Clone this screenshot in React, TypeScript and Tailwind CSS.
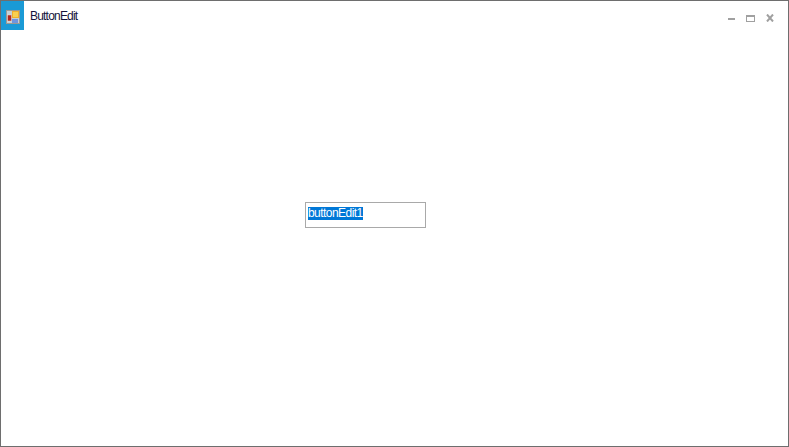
import React from 'react';

const AppIcon = () => (
    <svg width="14" height="14" viewBox="0 0 14 14" className="block">
        <rect x="0.5" y="0.5" width="13" height="13" fill="#c4d0d6" stroke="#9a9a94" />
        <rect x="1.5" y="5" width="4" height="6" fill="#b3261c" stroke="#e8e0d8" strokeWidth="0.5" />
        <rect x="6" y="1" width="7" height="7" fill="#f0b02c" />
        <rect x="7" y="2" width="5" height="5" fill="#f8d050" />
        <rect x="6" y="9" width="6" height="4" fill="#6f95df" />
    </svg>
);

export default function App() {
    return (
        <div className="w-[789px] h-[447px] bg-white border border-[#6e6e6e] overflow-hidden font-['Liberation_Sans',sans-serif]">
            <div className="flex items-start h-[30px]">
                <div className="w-[23px] h-[29px] bg-[#1a9ad6] pl-[5px] pt-[9px]">
                    <AppIcon />
                </div>
                <div className="ml-[6px] mt-[8px] text-[12px] leading-[14px] tracking-[-0.8px] text-[#14143c]">ButtonEdit</div>
                <div className="ml-auto mr-[14px] mt-[13px] flex items-start gap-[11px]">
                    <div className="w-[7px] h-[2px] mt-[4px] bg-[#a0a0a0]" />
                    <div className="w-[9px] h-[7px] mt-[1px] border border-[#a0a0a0] border-t-2" />
                    <svg width="8" height="8" viewBox="0 0 8 8" className="block">
                        <path d="M1 0.5 L7 7.5 M7 0.5 L1 7.5" stroke="#a0a0a0" strokeWidth="2" fill="none" />
                    </svg>
                </div>
            </div>
            <div className="pl-[304px] pt-[171px]">
                <div className="flex items-start w-[121px] h-[26px] border border-[#a9a9a9] pl-[2px] pt-[3px]">
                    <span className="block mt-[1px] bg-[#0078d7] text-white text-[12px] leading-[13px] tracking-[-0.55px]">buttonEdit1</span>
                </div>
            </div>
        </div>
    );
}
